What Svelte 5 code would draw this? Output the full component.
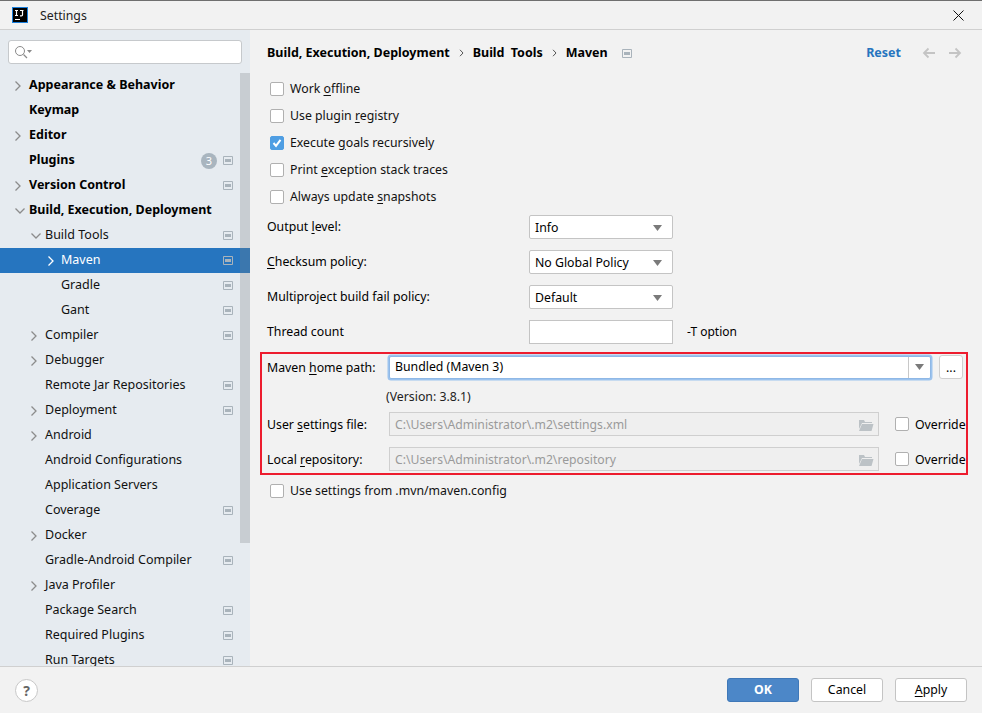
<script>
  const tree = [
    { t: 'Appearance & Behavior', d: 0, b: 1, a: 'r' },
    { t: 'Keymap', d: 0, b: 1 },
    { t: 'Editor', d: 0, b: 1, a: 'r' },
    { t: 'Plugins', d: 0, b: 1, i: 1, badge: '3' },
    { t: 'Version Control', d: 0, b: 1, a: 'r', i: 1 },
    { t: 'Build, Execution, Deployment', d: 0, b: 1, a: 'd' },
    { t: 'Build Tools', d: 1, a: 'd', i: 1 },
    { t: 'Maven', d: 2, a: 'r', i: 1, sel: 1 },
    { t: 'Gradle', d: 2, i: 1 },
    { t: 'Gant', d: 2, i: 1 },
    { t: 'Compiler', d: 1, a: 'r', i: 1 },
    { t: 'Debugger', d: 1, a: 'r' },
    { t: 'Remote Jar Repositories', d: 1, i: 1 },
    { t: 'Deployment', d: 1, a: 'r', i: 1 },
    { t: 'Android', d: 1, a: 'r' },
    { t: 'Android Configurations', d: 1 },
    { t: 'Application Servers', d: 1 },
    { t: 'Coverage', d: 1, i: 1 },
    { t: 'Docker', d: 1, a: 'r' },
    { t: 'Gradle-Android Compiler', d: 1, i: 1 },
    { t: 'Java Profiler', d: 1, a: 'r' },
    { t: 'Package Search', d: 1, i: 1 },
    { t: 'Required Plugins', d: 1, i: 1 },
    { t: 'Run Targets', d: 1, i: 1 }
  ];
</script>

{#snippet arrow()}
  <svg class="sel-arrow" viewBox="0 0 9 6" width="9" height="6"><path d="M0 0h9L4.500 6z" fill="#7a7a7a" /></svg>
{/snippet}

{#snippet proj()}
  <svg class="proj" viewBox="0 0 10 9" width="10" height="9"><path d="M.5.5h9v8h-9z" fill="none" stroke="#a9b3bb" /><path d="M2 3h6v3H2z" fill="#a9b3bb" /></svg>
{/snippet}

{#snippet folder()}
  <svg class="folder" viewBox="0 0 16 12" width="16" height="12"><path d="M1 1h5l1 2h7v1H4L1 10z" fill="#bcc2c6" /><path d="M4 5h11.500l-2 7H1z" fill="#bcc2c6" /></svg>
{/snippet}

<div class="win">
  <header class="title">
    <svg class="logo" viewBox="0 0 16 16" width="16" height="16">
      <rect x="0.5" y="0.500" width="15" height="15" fill="#000" stroke="#1a7fdc" />
      <path d="M3 3.500h3M4.500 3.500v5M3 8.500h3M8 3.500h3.500M10.500 3.500v4.500q0 .8-1 .8H8" fill="none" stroke="#fff" stroke-width="1.200" />
      <path d="M3 12.500h5" stroke="#fff" stroke-width="1" />
    </svg>
    <span class="title-text">Settings</span>
    <svg class="close" viewBox="0 0 11 11" width="11" height="11"><path d="M.5.500l10 10M10.500.500l-10 10" stroke="#111" stroke-width="1" fill="none" /></svg>
  </header>

  <div class="body">
    <aside class="side">
      <div class="search">
        <svg viewBox="0 0 18 14" width="18" height="14"><circle cx="6" cy="6" r="4.500" fill="none" stroke="#8a8a8a" /><path d="M9.500 9.500l3.500 3.500" stroke="#8a8a8a" stroke-width="1.300" /><path d="M13 5h5l-2.500 3z" fill="#8a8a8a" /></svg>
      </div>
      <ul class="tree">
        {#each tree as n}
          <li class="row d{n.d}" class:sel={n.sel} class:bold={n.b}>
            {#if n.a === 'r'}
              <svg class="chev" viewBox="0 0 8 12" width="8" height="12"><path d="M1.500 1.500l4.500 4.500-4.500 4.500" fill="none" stroke={n.sel ? '#fff' : '#8c8c8c'} stroke-width="1.300" /></svg>
            {:else if n.a === 'd'}
              <svg class="chev" viewBox="0 0 12 8" width="12" height="8"><path d="M1.500 1.500l4.500 4.500 4.500-4.500" fill="none" stroke="#8c8c8c" stroke-width="1.300" /></svg>
            {/if}
            <span class="label">{n.t}</span>
            {#if n.badge}<span class="badge">{n.badge}</span>{/if}
            {#if n.i}{@render proj()}{/if}
          </li>
        {/each}
      </ul>
      <div class="thumb"></div>
    </aside>

    <main class="main">
      <div class="crumbs">
        <b>Build, Execution, Deployment</b>
        <svg viewBox="0 0 5 8" width="5" height="8"><path d="M1 .800l3 3.200-3 3.200" fill="none" stroke="#555" /></svg>
        <b class="wide">Build Tools</b>
        <svg viewBox="0 0 5 8" width="5" height="8"><path d="M1 .800l3 3.200-3 3.200" fill="none" stroke="#555" /></svg>
        <b>Maven</b>
        {@render proj()}
        <span class="reset">Reset</span>
        <svg class="nav" viewBox="0 0 14 12" width="14" height="12"><path d="M13 6H2M6.500 1.500L2 6l4.500 4.500" fill="none" stroke="#c4c4c4" stroke-width="1.800" /></svg>
        <svg class="nav" viewBox="0 0 14 12" width="14" height="12"><path d="M1 6h11M7.500 1.500L12 6l-4.500 4.500" fill="none" stroke="#c4c4c4" stroke-width="1.800" /></svg>
      </div>

      <div class="checks">
        <div class="check"><span class="box"></span><span>Work <u>o</u>ffline</span></div>
        <div class="check"><span class="box"></span><span>Use plugin <u>r</u>egistry</span></div>
        <div class="check"><span class="box on"><svg viewBox="0 0 14 14" width="14" height="14"><path d="M3.500 7l2.500 2.800 4.500-6" fill="none" stroke="#fff" stroke-width="2" /></svg></span><span>Execute <u>g</u>oals recursively</span></div>
        <div class="check"><span class="box"></span><span>Print <u>e</u>xception stack traces</span></div>
        <div class="check"><span class="box"></span><span>Always update <u>s</u>napshots</span></div>
      </div>

      <div class="form">
        <div class="frow"><span class="flabel">Output <u>l</u>evel:</span><div class="select">Info{@render arrow()}</div></div>
        <div class="frow"><span class="flabel"><u>C</u>hecksum policy:</span><div class="select">No Global Policy{@render arrow()}</div></div>
        <div class="frow"><span class="flabel">Multiproject build fail policy:</span><div class="select">Default{@render arrow()}</div></div>
        <div class="frow"><span class="flabel">Thread count</span><div class="input"></div><span class="hint">-T option</span></div>
      </div>

      <section class="maven">
        <div class="mrow first">
          <span class="mlabel">Maven <u>h</u>ome path:</span>
          <div class="combo"><span class="combo-text">Bundled (Maven 3)</span><span class="combo-btn">{@render arrow()}</span></div>
          <span class="dots">...</span>
        </div>
        <div class="version">(Version: 3.8.1)</div>
        <div class="mrow second">
          <span class="mlabel">User <u>s</u>ettings file:</span>
          <div class="path">C:\Users\Administrator\.m2\settings.xml{@render folder()}</div>
          <span class="box"></span><span class="ovr">Override</span>
        </div>
        <div class="mrow third">
          <span class="mlabel">Local <u>r</u>epository:</span>
          <div class="path">C:\Users\Administrator\.m2\repository{@render folder()}</div>
          <span class="box"></span><span class="ovr">Override</span>
        </div>
      </section>

      <div class="check last"><span class="box"></span><span>Use settings from .mvn/maven.config</span></div>
    </main>
  </div>

  <footer class="foot">
    <span class="help">?</span>
    <span class="btn ok">OK</span>
    <span class="btn">Cancel</span>
    <span class="btn"><u>A</u>pply</span>
  </footer>
</div>

<style>
  :global(body) { margin: 0; background: #f2f2f2; }
  .win {
    width: 982px; height: 713px; display: flex; flex-direction: column; overflow: hidden;
    background: #f2f2f2; color: #000; box-sizing: border-box;
    font: 12.3px/18px "Noto Sans", sans-serif;
  }
  b, .row.bold, .reset { font-size: 12.5px; }
  .wide { word-spacing: 3px; }
  u { text-underline-offset: 2px; text-decoration-thickness: 1px; }
  .title {
    height: 30px; flex: none; box-sizing: border-box; display: flex; align-items: center;
    border-top: 1px solid #6f6f6f; border-bottom: 1px solid #d0d0d0; padding: 0 18px 0 12px;
  }
  .title-text { margin-left: 12px; padding-top: 2px; color: #222; }
  .close { margin-left: auto; }
  .body { flex: 1; display: flex; min-height: 0; }
  .side { width: 250px; flex: none; background: #e6ebf0; position: relative; overflow: hidden; }
  .search {
    margin: 10px 8px 0; height: 24px; box-sizing: border-box; background: #fff; border: 1px solid #c6c9cc;
    border-radius: 3px; display: flex; align-items: center; padding-left: 5px;
  }
  .tree { list-style: none; margin: 9px 0 0; padding: 0; font-size: 12.5px; }
  .row { height: 25px; display: flex; align-items: center; position: relative; padding-right: 17px; color: #111; }
  .row.bold { font-weight: 700; color: #000; }
  .d0 { padding-left: 29px; }
  .d1 { padding-left: 45px; }
  .d2 { padding-left: 61px; }
  .chev { position: absolute; top: 50%; transform: translateY(-50%); }
  .d0 .chev { left: 14px; }
  .d1 .chev { left: 30px; }
  .d2 .chev { left: 47px; }
  .row.sel { background: #2675bf; color: #fff; }
  .label { white-space: nowrap; padding-bottom: 2px; }
  .proj { flex: none; }
  .row .proj { position: absolute; right: 17px; top: 8px; }
  .badge {
    position: absolute; right: 33px; top: 5px; width: 16px; height: 16px; border-radius: 50%;
    background: #a9b5bf; color: #fff; font-size: 11px; font-weight: 400; line-height: 16px; text-align: center;
  }
  .thumb { position: absolute; right: 0; top: 43px; bottom: 123px; width: 10px; background: rgba(120, 125, 130, 0.27); }
  .main { flex: 1; padding: 0 0 0 17px; min-width: 0; position: relative; }
  .crumbs { display: flex; align-items: center; height: 18px; margin-top: 14px; gap: 9px; padding-right: 20px; }
  .crumbs b { white-space: nowrap; }
  .crumbs .proj { margin-left: 5px; }
  .reset { margin-left: auto; color: #2675bf; font-weight: 700; margin-right: 12px; }
  .nav + .nav { margin-left: 3px; }
  .checks { margin-top: 13px; padding-left: 3px; display: flex; flex-direction: column; }
  .check { height: 27px; display: flex; align-items: center; gap: 6px; white-space: nowrap; color: #111; }
  .box {
    width: 14px; height: 14px; flex: none; box-sizing: border-box; background: #fff; border: 1px solid #b0b0b0; border-radius: 2px;
  }
  .box.on { background: #4f9ee3; border-color: #4f9ee3; position: relative; }
  .box.on svg { position: absolute; left: -1px; top: -1px; }
  .form { margin-top: 5px; }
  .frow { height: 24px; display: flex; align-items: center; margin-bottom: 11px; }
  .flabel { width: 262px; flex: none; white-space: nowrap; }
  .select, .input {
    width: 144px; height: 24px; box-sizing: border-box; background: #fff; border: 1px solid #c4c4c4; border-radius: 2px;
    display: flex; align-items: center; padding: 1px 10px 0 5px; justify-content: space-between; white-space: nowrap;
  }
  .input { border-radius: 0; }
  .hint { margin-left: 14px; font-size: 12px; }
  .maven {
    width: 708px; height: 123px; box-sizing: border-box; margin-left: -7px; margin-top: -3px;
    border: 2px solid #ed1c2e; position: relative; overflow: hidden; padding-left: 5px;
  }
  .mrow { display: flex; align-items: center; height: 24px; }
  .mrow.first { margin-top: 1px; }
  .mrow.second { margin-top: 7px; }
  .mrow.third { margin-top: 11px; }
  .mlabel { width: 122px; flex: none; white-space: nowrap; padding-top: 1px; }
  .combo {
    width: 542px; height: 23px; flex: none; box-sizing: border-box; background: #fff; border: 1px solid #8fb8e6; border-radius: 2px;
    box-shadow: 0 0 0 1.500px #9cc3ee; display: flex; align-items: center;
  }
  .combo-text { flex: 1; padding-left: 5px; }
  .combo-btn { width: 22px; height: 100%; border-left: 1px solid #c8c8c8; display: flex; align-items: center; justify-content: center; box-sizing: border-box; }
  .dots {
    width: 24px; height: 24px; box-sizing: border-box; margin-left: 8px; background: #fff; border: 1px solid #d0d0d0;
    border-radius: 3px; text-align: center; line-height: 24px; flex: none;
  }
  .version { margin: 9px 0 0 119px; color: #222; height: 17px; }
  .path {
    width: 490px; height: 24px; flex: none; box-sizing: border-box; border: 1px solid #cfcfcf; color: #9a9a9a; font-size: 12.2px;
    display: flex; align-items: center; justify-content: space-between; padding: 1px 4px 0 5px; white-space: nowrap; background: #efefef;
  }
  .mrow .box { margin-left: 16px; }
  .ovr { margin-left: 6px; white-space: nowrap; padding-top: 1px; }
  .check.last { margin: 2px 0 0 3px; }
  .foot {
    height: 47px; flex: none; box-sizing: border-box; border-top: 1px solid #d0d0d0; display: flex; align-items: center;
    justify-content: flex-end; gap: 12px; padding: 0 15px 0 15px; position: relative;
  }
  .help {
    margin-right: auto; width: 23px; height: 23px; box-sizing: border-box; border: 1px solid #c8c8c8; border-radius: 50%;
    background: #fff; text-align: center; line-height: 21px; font-weight: 700; font-size: 14px; color: #666;
  }
  .btn {
    width: 72px; height: 24px; box-sizing: border-box; border: 1px solid #c4c4c4; border-radius: 3px; background: #fff;
    text-align: center; line-height: 22px;
  }
  .btn.ok { background: #4c87c8; border-color: #3f78b8; color: #fff; font-weight: 700; }
</style>
